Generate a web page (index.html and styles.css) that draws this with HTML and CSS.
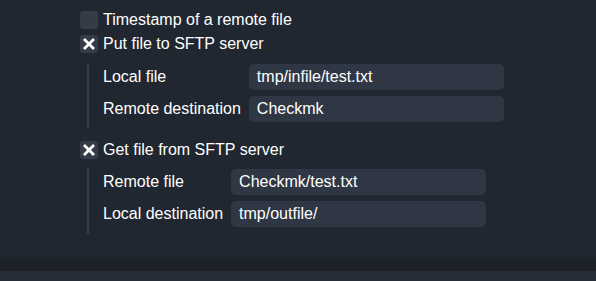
FILE: index.html
```html
<!DOCTYPE html>
<html>
<head>
<meta charset="utf-8">
<link rel="stylesheet" href="styles.css">
</head>
<body>
<div class="main">
  <div class="form">
    <div class="cb-row">
      <span class="cb"></span>
      <span class="cb-label">Timestamp of a remote file</span>
    </div>
    <div class="cb-row">
      <span class="cb"><svg width="12" height="12" viewBox="0 0 12 12"><path d="M1 1 L11 11 M11 1 L1 11" stroke="#fff" stroke-width="2.8" stroke-linecap="butt"/></svg></span>
      <span class="cb-label">Put file to SFTP server</span>
    </div>
    <div class="group group-put">
      <div class="label">Local file</div>
      <div class="input">tmp/infile/test.txt</div>
      <div class="label">Remote destination</div>
      <div class="input">Checkmk</div>
    </div>
    <div class="cb-row cb-row-get">
      <span class="cb"><svg width="12" height="12" viewBox="0 0 12 12"><path d="M1 1 L11 11 M11 1 L1 11" stroke="#fff" stroke-width="2.8" stroke-linecap="butt"/></svg></span>
      <span class="cb-label">Get file from SFTP server</span>
    </div>
    <div class="group group-get">
      <div class="label">Remote file</div>
      <div class="input">Checkmk/test.txt</div>
      <div class="label">Local destination</div>
      <div class="input">tmp/outfile/</div>
    </div>
  </div>
</div>
<div class="band"></div>
<div class="footer"></div>
</body>
</html>
```
FILE: styles.css
```css
html, body {
  margin: 0;
  padding: 0;
  background: #212730;
}
body {
  font-family: "Liberation Sans", Arial, sans-serif;
  font-size: 16px;
  color: #ffffff;
  width: 596px;
  height: 281px;
  overflow: hidden;
}
.main {
  height: 259px;
  background: #212730;
}
.form {
  padding: 8px 0 0 80px;
}
.cb-row {
  display: flex;
  align-items: center;
  height: 24px;
  gap: 5px;
}
.cb {
  width: 18px;
  height: 18px;
  border-radius: 3px;
  background: #363c47;
  display: flex;
  align-items: center;
  justify-content: center;
}
.cb-label {
  line-height: 24px;
}
.group {
  margin-left: 7px;
  border-left: 2px solid #383e49;
  padding-left: 14px;
  padding-bottom: 7px;
  display: grid;
  grid-template-columns: auto 255px;
  column-gap: 8px;
  row-gap: 6px;
  align-items: center;
  width: max-content;
}
.group-put {
  margin-top: 8px;
}
.cb-row-get {
  margin-top: 9px;
}
.group-get {
  margin-top: 6px;
  padding-top: 1px;
}
.label {
  line-height: 26px;
}
.input {
  height: 26px;
  line-height: 26px;
  background: #2f3744;
  border-radius: 5px;
  padding-left: 8px;
  box-sizing: border-box;
}
.band {
  height: 12px;
  background: #1d2128;
}
.footer {
  height: 10px;
  background: #262d38;
}
```
